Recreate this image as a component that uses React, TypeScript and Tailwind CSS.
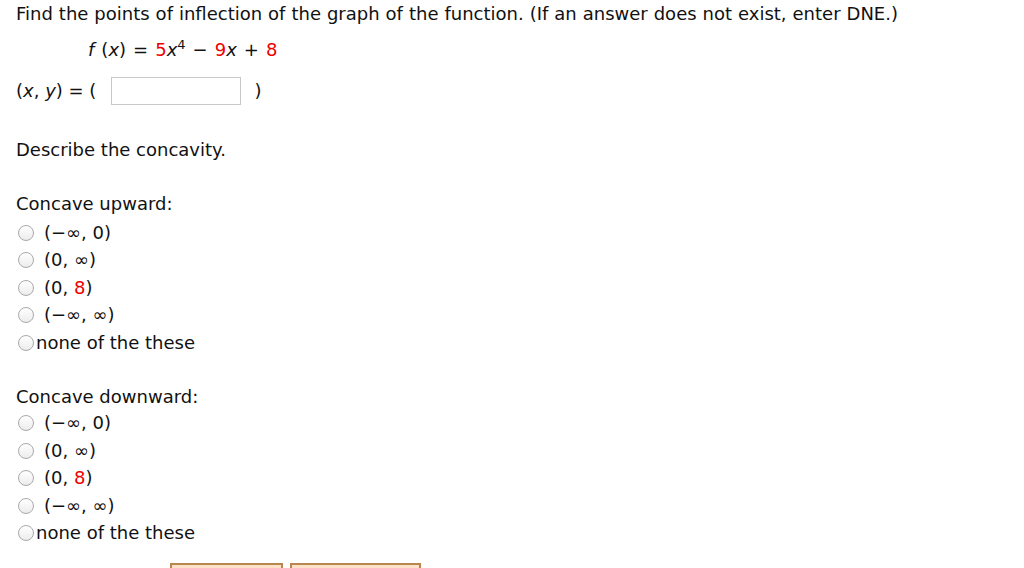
import type { ReactNode } from 'react'

const red = 'text-[#ee0000]'

function Radio({ children, tight }: { children: ReactNode; tight?: boolean }) {
  return (
    <label className="flex h-[27.5px] items-center">
      <span className="ml-[18px] inline-block size-[16px] rounded-full border border-[#a9a9a9] bg-gradient-to-b from-white to-[#ececec]" />
      <span className={tight ? 'ml-[2px]' : 'ml-[10px]'}>{children}</span>
    </label>
  )
}

function Options() {
  return (
    <div>
      <Radio>(−∞, 0)</Radio>
      <Radio>(0, ∞)</Radio>
      <Radio>(0, <span className={red}>8</span>)</Radio>
      <Radio>(−∞, ∞)</Radio>
      <Radio tight>none of the these</Radio>
    </div>
  )
}

export default function App() {
  return (
    <main className="h-[568px] w-[1024px] overflow-hidden bg-white text-[18px] leading-[18px] text-[#111] [font-family:'DejaVu_Sans',Verdana,sans-serif]">
      <p className="pl-4 pt-[5px] [word-spacing:0.25px]">
        Find the points of inflection of the graph of the function. (If an answer does not exist, enter DNE.)
      </p>

      <p className="mt-[18px] pl-[88px] [word-spacing:1.3px]">
        <i>f</i> (<i>x</i>) = <span className={red}>5</span><i>x</i>
        <span className="relative -top-[7px] text-[13px] leading-none">4</span> − <span className={red}>9</span><i>x</i> +{' '}
        <span className={red}>8</span>
      </p>

      <div className="mt-[18px] flex items-center pl-4">
        <span>(<i>x</i>, <i>y</i>) = (</span>
        <input className="ml-[15px] h-[28px] w-[130px] border border-[#c8c8c8] bg-white" aria-label="point" />
        <span className="ml-[13px]">)</span>
      </div>

      <p className="mt-[36px] pl-4">Describe the concavity.</p>

      <p className="mt-[36px] pl-4">Concave upward:</p>
      <div className="mt-[6px]">
        <Options />
      </div>

      <p className="mt-[31px] pl-4">Concave downward:</p>
      <div className="mt-[4px]">
        <Options />
      </div>

      <div className="mt-[16px] flex items-start gap-[7px] pl-[170px]">
        <button className="h-[40px] w-[113px] border-2 border-[#b98550] bg-[#fde2c8]" />
        <button className="h-[40px] w-[131px] border-2 border-[#b98550] bg-[#fde2c8]" />
      </div>
    </main>
  )
}
